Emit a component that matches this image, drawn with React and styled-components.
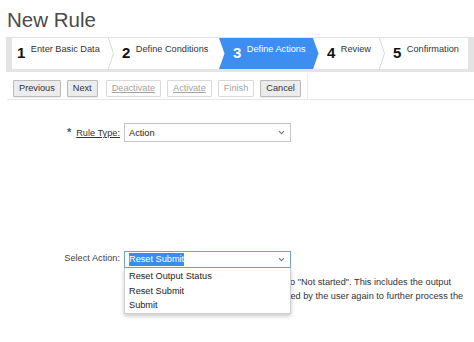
import React from "react";
import styled, { createGlobalStyle } from "styled-components";

const GlobalStyle = createGlobalStyle`
  html, body { margin: 0; padding: 0; background: #ffffff; }
  body { font-family: "Liberation Sans", Arial, sans-serif; color: #333; }
  * { box-sizing: border-box; }
`;

const Page = styled.div`
  width: 474px;
  height: 342px;
  overflow: hidden;
  position: relative;
`;

const Title = styled.h1`
  margin: 0;
  padding: 8px 0 0 7px;
  font-size: 20.5px;
  line-height: 24px;
  font-weight: normal;
  color: #4a4a4a;
`;

const Roadmap = styled.div`
  margin: 5px 0 0 6px;
  padding: 1px 0 3px 6px;
  background: #e4e4e4;
  display: flex;
  height: 35px;
`;

const Step = styled.div`
  width: ${(p) => p.$width}px;
  flex: none;
  display: flex;
  align-items: flex-start;
  gap: 5.5px;
  padding: 5.5px 0 0 ${(p) => (p.$first ? 5 : 8)}px;
  background: ${(p) => (p.$active ? "#3d8ef0" : "#ffffff")};
  color: ${(p) => (p.$active ? "#ffffff" : "#333333")};
`;

const StepNumber = styled.span`
  font-size: 15px;
  line-height: 17px;
  font-weight: bold;
  color: ${(p) => (p.$active ? "#ffffff" : "#111111")};
`;

const StepLabel = styled.span`
  font-size: 9.2px;
  line-height: 11px;
  white-space: nowrap;
`;

const SepSvg = styled.svg`
  flex: none;
  display: block;
  width: 6px;
  height: 31px;
`;

function StepSeparator({ prev, next }) {
  const plain = prev === "#ffffff" && next === "#ffffff";
  return (
    <SepSvg viewBox="0 0 6 31" preserveAspectRatio="none">
      <rect x="0" y="0" width="6" height="31" fill={next} />
      <polygon points="0,0 5.5,15.5 0,31" fill={prev} />
      {plain && (
        <polyline
          points="0.3,0 5.5,15.5 0.3,31"
          fill="none"
          stroke="#d9d9d9"
          strokeWidth="1"
        />
      )}
    </SepSvg>
  );
}

const Toolbar = styled.div`
  margin-left: 7px;
  padding: 8px 0 2px 6px;
  border-bottom: 1px solid #e6e6e6;
  display: flex;
  align-items: flex-end;
  gap: 6px;
  height: 28px;
`;

const ToolButton = styled.button`
  height: 17px;
  margin: 0;
  margin-left: ${(p) => p.$extra || 0}px;
  padding: 0 5px;
  font-family: "Liberation Sans", Arial, sans-serif;
  font-size: 9.2px;
  line-height: 15px;
  border-radius: 1px;
  border: 1px solid ${(p) => (p.disabled ? "#dadada" : "#bababa")};
  background: ${(p) => (p.disabled ? "#ffffff" : "#ececec")};
  color: ${(p) => (p.disabled ? "#a3a3a3" : "#333333")};
  text-decoration: ${(p) => (p.$underline ? "underline" : "none")};
  box-shadow: ${(p) => (p.disabled ? "none" : "0 1px 0 rgba(0,0,0,0.06)")};
  cursor: default;
`;

const ToolbarDivider = styled.div`
  width: 1px;
  align-self: stretch;
  margin-top: -7px;
  margin-bottom: -2px;
  background: #ececec;
`;

const FormRow = styled.div`
  display: grid;
  grid-template-columns: 120px 1fr;
  column-gap: 4px;
  align-items: start;
  margin-top: ${(p) => p.$top}px;
`;

const FieldLabel = styled.div`
  text-align: right;
  font-size: 9.2px;
  line-height: ${(p) => p.$lh}px;
  color: #444;
  white-space: nowrap;
`;

const Required = styled.span`
  color: #2c5d91;
  font-weight: bold;
  font-size: 11px;
  margin-right: 5px;
`;

const LabelLink = styled.span`
  text-decoration: underline;
  color: #333;
`;

const FieldWrap = styled.div`
  position: relative;
`;

const SelectBox = styled.div`
  width: 167px;
  height: ${(p) => p.$h}px;
  border: 1px solid ${(p) => (p.$focused ? "#6ea1dc" : "#c4c4c4")};
  background: #ffffff;
  display: flex;
  align-items: center;
  justify-content: space-between;
  padding: 0 5px 0 4px;
  font-size: 9.2px;
  color: #222;
`;

const Highlight = styled.span`
  background: #3b8de8;
  color: #ffffff;
  padding: 1px 0;
  line-height: 11px;
`;

const ChevronSvg = styled.svg`
  width: 7px;
  height: 5px;
  display: block;
`;

function Chevron() {
  return (
    <ChevronSvg viewBox="0 0 7 5">
      <polyline
        points="1,1.2 3.5,3.7 6,1.2"
        fill="none"
        stroke="#777777"
        strokeWidth="1.1"
      />
    </ChevronSvg>
  );
}

const Dropdown = styled.div`
  position: absolute;
  top: 17px;
  left: 0;
  width: 167px;
  height: 46px;
  background: #ffffff;
  border: 1px solid #cfcfcf;
  border-top: none;
  box-shadow: 0 2px 4px rgba(0, 0, 0, 0.22);
  padding-top: 1px;
  z-index: 2;
`;

const Option = styled.div`
  height: 14.5px;
  line-height: 14.5px;
  padding-left: 4px;
  font-size: 9.2px;
  color: #222;
  white-space: nowrap;
`;

const HelpText = styled.p`
  margin: 8px 0 0 0;
  width: 346px;
  font-size: 9.2px;
  line-height: 13.5px;
  color: #333;
`;

const steps = [
  { n: "1", label: "Enter Basic Data", w: 96 },
  { n: "2", label: "Define Conditions", w: 105 },
  { n: "3", label: "Define Actions", w: 88, active: true },
  { n: "4", label: "Review", w: 60 },
  { n: "5", label: "Confirmation", w: 83 },
];

export default function App() {
  return (
    <Page>
      <GlobalStyle />
      <Title>New Rule</Title>
      <Roadmap>
        {steps.map((s, i) => (
          <React.Fragment key={s.n}>
            {i > 0 && (
              <StepSeparator
                prev={steps[i - 1].active ? "#3d8ef0" : "#ffffff"}
                next={s.active ? "#3d8ef0" : "#ffffff"}
              />
            )}
            <Step $width={s.w} $active={s.active} $first={i === 0}>
              <StepNumber $active={s.active}>{s.n}</StepNumber>
              <StepLabel>{s.label}</StepLabel>
            </Step>
          </React.Fragment>
        ))}
      </Roadmap>
      <Toolbar>
        <ToolButton>Previous</ToolButton>
        <ToolButton>Next</ToolButton>
        <ToolButton disabled $underline $extra={2}>
          Deactivate
        </ToolButton>
        <ToolButton disabled $underline>
          Activate
        </ToolButton>
        <ToolButton disabled>Finish</ToolButton>
        <ToolButton>Cancel</ToolButton>
        <ToolbarDivider />
      </Toolbar>
      <FormRow $top={23}>
        <FieldLabel $lh={19}>
          <Required>*</Required>
          <LabelLink>Rule Type:</LabelLink>
        </FieldLabel>
        <FieldWrap>
          <SelectBox $h={19}>
            <span>Action</span>
            <Chevron />
          </SelectBox>
        </FieldWrap>
      </FormRow>
      <FormRow $top={108}>
        <FieldLabel $lh={14}>Select Action:</FieldLabel>
        <FieldWrap>
          <SelectBox $h={17} $focused>
            <Highlight>Reset Submit</Highlight>
            <Chevron />
          </SelectBox>
          <Dropdown>
            <Option>Reset Output Status</Option>
            <Option>Reset Submit</Option>
            <Option>Submit</Option>
          </Dropdown>
          <HelpText>
            The status of the chosen output is reset to "Not started". This
            includes the output documents. Each output must be submitted by the
            user again to further process the output.
          </HelpText>
        </FieldWrap>
      </FormRow>
    </Page>
  );
}
